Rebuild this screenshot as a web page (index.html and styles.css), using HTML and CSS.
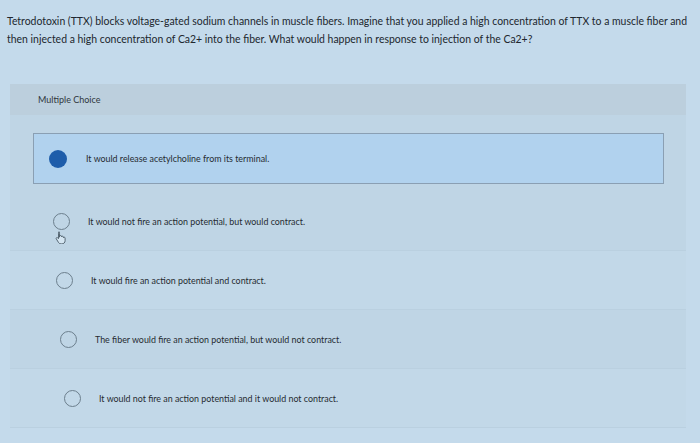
FILE: index.html
```html
<!DOCTYPE html>
<html lang="en">
<head>
<meta charset="UTF-8">
<title>Multiple Choice</title>
<link rel="stylesheet" href="styles.css">
</head>
<body>

<div class="question">
    Tetrodotoxin (TTX) blocks voltage-gated sodium channels in muscle fibers. Imagine that you applied a high concentration of TTX to a muscle fiber and<br>
    then injected a high concentration of Ca2+ into the fiber. What would happen in response to injection of the Ca2+?
</div>

<div class="panel">
    <div class="panel-head">Multiple Choice</div>

    <div class="choice selected">
        <span class="radio"></span>
        <span class="choice-text">It would release acetylcholine from its terminal.</span>
    </div>

    <div class="choices">
        <div class="choice row-1">
            <span class="radio">
                <svg class="cursor" width="12" height="13" viewBox="0 0 12 13">
                    <path d="M3.5 1.2c.6 0 1 .4 1 1v4l.1-.9c.1-.5.5-.8 1-.8s.9.4.9.9v.6c.1-.5.5-.8 1-.8.5 0 .9.4.9.9v.7c.2-.4.5-.6.9-.6.5 0 .8.4.8.9v2.6c0 1.8-1.4 3.2-3.2 3.2H6c-1 0-1.8-.5-2.4-1.3L1.3 7.9c-.3-.4-.2-1 .2-1.2.4-.3.9-.2 1.2.1l.8.9V2.2c0-.6.4-1 1-1z" fill="#d5e6f2" stroke="#4a5a66" stroke-width=".9"/>
                </svg>
            </span>
            <span class="choice-text">It would not fire an action potential, but would contract.</span>
        </div>
        <div class="choice row-2">
            <span class="radio"></span>
            <span class="choice-text">It would fire an action potential and contract.</span>
        </div>
        <div class="choice row-3">
            <span class="radio"></span>
            <span class="choice-text">The fiber would fire an action potential, but would not contract.</span>
        </div>
        <div class="choice row-4">
            <span class="radio"></span>
            <span class="choice-text">It would not fire an action potential and it would not contract.</span>
        </div>
    </div>
</div>

</body>
</html>
```

FILE: styles.css
```css
html, body {
    margin: 0;
    padding: 0;
    height: 100%;
    background-color: #c4daeb;
    font-family: Lato, "Open Sans", Arial, sans-serif;
    color: #252b31;
    overflow: hidden;
}

.question {
    padding: 12px 4px 0 7px;
    font-size: 10.45px;
    line-height: 18px;
    white-space: nowrap;
    color: #21272e;
}

.panel {
    margin: 36px 14px 0 10px;
    height: 338px;
    background-color: #bfd5e5;
}

.panel-head {
    height: 31px;
    display: flex;
    align-items: center;
    padding-left: 28px;
    font-size: 9px;
    color: #2f363c;
    background-color: #bccfdd;
}

.choice {
    display: flex;
    align-items: center;
    font-size: 8.9px;
    color: #262b31;
}

.choice.selected {
    margin: 18px 22px 0 23px;
    height: 49px;
    padding-left: 15px;
    background-color: #b1d2ee;
    border: 1px solid #8a9fb3;
}

.selected .radio {
    width: 18px;
    height: 18px;
    background-color: #1e5daa;
    border: none;
    margin-right: 19px;
}

.radio {
    position: relative;
    flex: none;
    width: 15px;
    height: 15px;
    border: 1.3px solid #6c7f8d;
    border-radius: 50%;
    margin-right: 18px;
}

.cursor {
    position: absolute;
    left: 1px;
    top: 17px;
}

.choices {
    margin-top: 8px;
}

.choices .choice {
    height: 58px;
    border-bottom: 1px solid #bad0e0;
}

.choices .choice:nth-child(even) {
    background-color: #c2d8e8;
}

.row-1 { padding-left: 43px; }
.row-2 { padding-left: 46px; }
.row-3 { padding-left: 50px; }
.row-4 { padding-left: 54px; border-bottom: none; }
```
